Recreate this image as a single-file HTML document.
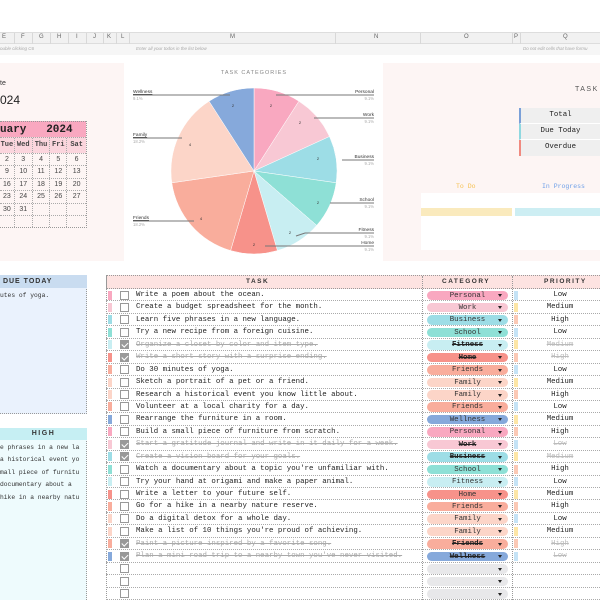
<!DOCTYPE html>
<html><head><meta charset="utf-8"><style>
*{margin:0;padding:0;box-sizing:border-box}
body{width:600px;height:600px;overflow:hidden;background:#fff;position:relative;font-family:"Liberation Sans",sans-serif}
.a{position:absolute}
.mono{font-family:"Liberation Mono",monospace}
.colh{position:absolute;top:32px;height:12px;background:#f1f1f1;left:0;width:600px;border-top:1px solid #ddd;border-bottom:1px solid #ddd}
.colh span{position:absolute;top:1px;font-size:6px;color:#666;text-align:center}
.colh i{position:absolute;top:0;height:11px;border-left:1px solid #d8d8d8}
.hint{position:absolute;top:44px;height:11px;left:0;width:600px;background:#f6f6f6;font-size:4.5px;color:#aaa;font-style:italic}
.cal{position:absolute;left:0;top:121px;width:87px;border-right:1px dotted #999;border-bottom:1px dotted #999}
.cal .t{height:16px;background:#f9a8c0;font:bold 11px "Liberation Mono",monospace;color:#222;line-height:16px;border-top:1px dotted #999}
.cal .r{display:flex;height:12.4px;border-top:1px dotted #aaa}
.cal .r div{font:7px "Liberation Sans",sans-serif;color:#444;text-align:center;line-height:11px;border-right:1px dotted #aaa}
.rows{position:absolute;left:106px;top:289px;width:494px}
.row{position:relative;height:12.45px;border-bottom:1px dotted #aaa;font:7.4px "Liberation Mono",monospace;color:#222}
.row .s{position:absolute;left:2px;top:1.5px;width:4px;height:9px}
.row .c{position:absolute;left:14px;top:1.5px;width:9px;height:9px;border:1px solid #999;background:#fff}
.row .c.k{background:#999;border-color:#999}
.row .c.k:after{content:"";position:absolute;left:2.2px;top:0px;width:2.5px;height:5px;border:solid #fff;border-width:0 1.2px 1.2px 0;transform:rotate(45deg)}
.row .x{position:absolute;left:30px;top:0;line-height:12px;white-space:nowrap}
.row.d .x{color:#aaa;text-decoration:line-through}
.row .p{position:absolute;left:321px;top:1.5px;width:81px;height:9.5px;border-radius:5px;text-align:center;line-height:10px;color:#333}
.row .p:after{content:"";position:absolute;right:6px;top:3.5px;border:2.5px solid transparent;border-top:3px solid #222}
.row.d .p{text-decoration:line-through;font-weight:bold;color:#222}
.row .q{position:absolute;left:408px;top:1.5px;width:4px;height:9px}
.row .v{position:absolute;left:414px;width:80px;text-align:center;line-height:12px}
.row.d .v{color:#bbb;text-decoration:line-through}
.vl{position:absolute;top:276px;height:324px;border-left:1px dotted #999}
</style></head><body>

<div class="colh">
<i style="left:14px"></i><i style="left:32px"></i><i style="left:50px"></i><i style="left:68px"></i><i style="left:86px"></i><i style="left:103px"></i><i style="left:116px"></i><i style="left:129px"></i><i style="left:335px"></i><i style="left:420px"></i><i style="left:512px"></i><i style="left:520px"></i>
<span style="left:2px">E</span><span style="left:21px">F</span><span style="left:39px">G</span><span style="left:57px">H</span><span style="left:76px">I</span><span style="left:93px">J</span><span style="left:107px">K</span><span style="left:121px">L</span><span style="left:230px">M</span><span style="left:374px">N</span><span style="left:464px">O</span><span style="left:514px">P</span><span style="left:563px">Q</span>
</div>
<div class="hint"><span class="a" style="left:0;top:2px">ouble clicking C6</span><span class="a" style="left:136px;top:2px">Enter all your todos in the list below</span><span class="a" style="left:523px;top:2px">Do not edit cells that have formu</span></div>

<div class="a" style="left:0;top:63px;width:124px;height:198px;background:#fdf5f4"></div>
<div class="a" style="left:383px;top:63px;width:217px;height:198px;background:#fdf5f4"></div>
<div class="a" style="left:0;top:80px;font-size:7px;color:#333">te</div>
<div class="a" style="left:0;top:93px;font-size:12px;color:#222">024</div>

<div class="cal">
<div class="t">uary&nbsp;&nbsp;&nbsp;2024</div>
<div class="r" style="background:#fbd5dd;height:16px"><div style="width:15px;font:bold 7px 'Liberation Mono',monospace;line-height:15px">Tue</div><div style="width:18px;font:bold 7px 'Liberation Mono',monospace;line-height:15px">Wed</div><div style="width:18px;font:bold 7px 'Liberation Mono',monospace;line-height:15px">Thu</div><div style="width:17px;font:bold 7px 'Liberation Mono',monospace;line-height:15px">Fri</div><div style="width:19px;font:bold 7px 'Liberation Mono',monospace;line-height:15px;border:0">Sat</div></div>
<div class="r"><div style="width:15px">2</div><div style="width:18px">3</div><div style="width:18px">4</div><div style="width:17px">5</div><div style="width:19px;border:0">6</div></div>
<div class="r"><div style="width:15px">9</div><div style="width:18px">10</div><div style="width:18px">11</div><div style="width:17px">12</div><div style="width:19px;border:0">13</div></div>
<div class="r"><div style="width:15px">16</div><div style="width:18px">17</div><div style="width:18px">18</div><div style="width:17px">19</div><div style="width:19px;border:0">20</div></div>
<div class="r"><div style="width:15px">23</div><div style="width:18px">24</div><div style="width:18px">25</div><div style="width:17px">26</div><div style="width:19px;border:0">27</div></div>
<div class="r"><div style="width:15px">30</div><div style="width:18px">31</div><div style="width:18px"></div><div style="width:17px"></div><div style="width:19px;border:0"></div></div>
<div class="r"><div style="width:15px"></div><div style="width:18px"></div><div style="width:18px"></div><div style="width:17px"></div><div style="width:19px;border:0"></div></div>
</div>

<svg class="a" style="left:0;top:0" width="600" height="270">
<text x="254" y="74" font-size="5.5" fill="#888" text-anchor="middle" letter-spacing="1" font-family="Liberation Sans">TASK CATEGORIES</text>
<g stroke="#fff" stroke-width="0.5">
<path d="M254 171L254 88A83 83 0 0 1 298.9 101.2Z" fill="#f9a8c0"/>
<path d="M254 171L298.9 101.2A83 83 0 0 1 329.5 136.5Z" fill="#f8c8d4"/>
<path d="M254 171L329.5 136.5A83 83 0 0 1 336.2 182.8Z" fill="#9ddde6"/>
<path d="M254 171L336.2 182.8A83 83 0 0 1 316.7 225.4Z" fill="#8ee0d6"/>
<path d="M254 171L316.7 225.4A83 83 0 0 1 277.4 250.6Z" fill="#c8eef2"/>
<path d="M254 171L277.4 250.6A83 83 0 0 1 230.6 250.6Z" fill="#f7928a"/>
<path d="M254 171L230.6 250.6A83 83 0 0 1 171.8 182.8Z" fill="#f9ad9c"/>
<path d="M254 171L171.8 182.8A83 83 0 0 1 209.1 101.2Z" fill="#fcd5c8"/>
<path d="M254 171L209.1 101.2A83 83 0 0 1 254 88Z" fill="#86a9db"/>
</g>
<g font-size="4" fill="#333" font-family="Liberation Sans" text-anchor="middle">
<text x="271" y="107">2</text><text x="300" y="124">2</text><text x="318" y="160">2</text><text x="318" y="204">2</text><text x="290" y="234">2</text><text x="254" y="246">2</text><text x="201" y="220">4</text><text x="190" y="146">4</text><text x="233" y="107">2</text>
</g>
<g stroke="#777" stroke-width="1" fill="none">
<path d="M133 95H230M374 95H276M374 118H314M374 160H342M374 203H330M374 233H305L296 236M374 246H265M133 138H182M133 221H194"/>
</g>
<g font-size="4.8" font-family="Liberation Sans" fill="#333">
<text x="133" y="93" text-decoration="underline">Wellness</text><text x="133" y="136" text-decoration="underline">Family</text><text x="133" y="219" text-decoration="underline">Friends</text>
<g text-anchor="end"><text x="374" y="93">Personal</text><text x="374" y="116">Work</text><text x="374" y="158">Business</text><text x="374" y="201">School</text><text x="374" y="231">Fitness</text><text x="374" y="244">Home</text></g>
</g>
<g font-size="4.2" font-family="Liberation Sans" fill="#aaa">
<text x="133" y="100">9.1%</text><text x="133" y="143">18.2%</text><text x="133" y="226">18.2%</text>
<g text-anchor="end"><text x="374" y="100">9.1%</text><text x="374" y="123">9.1%</text><text x="374" y="165">9.1%</text><text x="374" y="208">9.1%</text><text x="374" y="238">9.1%</text><text x="374" y="251">9.1%</text></g>
</g>
</svg>

<div class="a" style="left:575px;top:86px;font-size:7px;letter-spacing:1.5px;color:#555">TASK</div>
<div class="a mono" style="left:519px;top:108px;width:81px;font-size:7.4px;color:#222">
<div style="height:16px;background:#efefef;border-left:2px solid #7aa0d8;border-bottom:1px solid #fff;text-align:center;line-height:15px">Total</div>
<div style="height:16px;background:#efefef;border-left:2px solid #8fd8e0;border-bottom:1px solid #fff;text-align:center;line-height:15px">Due Today</div>
<div style="height:16px;background:#efefef;border-left:2px solid #f08a80;text-align:center;line-height:15px">Overdue</div>
</div>
<div class="a" style="left:421px;top:193px;width:179px;height:57px;background:#fff"></div>
<div class="a mono" style="left:456px;top:183px;font-size:6.5px;color:#f5c050">To Do</div>
<div class="a mono" style="left:542px;top:183px;font-size:6.5px;color:#6fa0e8">In Progress</div>
<div class="a" style="left:421px;top:208px;width:91px;height:8px;background:#faeabd"></div>
<div class="a" style="left:515px;top:208px;width:85px;height:8px;background:#cdeef3"></div>

<div class="a" style="left:0;top:275px;width:87px;height:139px;background:#eaf2fd;border:1px dotted #999;border-left:0"></div>
<div class="a" style="left:0;top:275px;width:87px;height:13px;background:#c9dcf0;font:bold 7px 'Liberation Sans',sans-serif;letter-spacing:1px;line-height:13px;color:#333">&nbsp;DUE TODAY</div>
<div class="a mono" style="left:0;top:292px;font-size:6.3px;color:#333">utes of yoga.</div>
<div class="a" style="left:0;top:428px;width:87px;height:172px;background:#eefbfd;border:1px dotted #999;border-left:0;border-bottom:0"></div>
<div class="a" style="left:0;top:428px;width:87px;height:12px;background:#c6eff3;font:bold 7px 'Liberation Sans',sans-serif;letter-spacing:1.5px;line-height:12px;color:#333;text-align:center">HIGH</div>
<div class="a mono" style="left:0;top:442px;width:87px;overflow:hidden;font-size:6.3px;line-height:12.4px;color:#333;white-space:pre">e phrases in a new la
a historical event yo
mall piece of furnitu
documentary about a 
hike in a nearby natu</div>

<div class="a" style="left:106px;top:275px;width:494px;height:14px;background:#fde3e1;border:1px dotted #999;border-right:0"></div>
<div class="a" style="left:246px;top:278px;font:bold 6.5px 'Liberation Sans',sans-serif;letter-spacing:1.5px;color:#333">TASK</div>
<div class="a" style="left:442px;top:278px;font:bold 6.5px 'Liberation Sans',sans-serif;letter-spacing:1.5px;color:#333">CATEGORY</div>
<div class="a" style="left:544px;top:278px;font:bold 6.5px 'Liberation Sans',sans-serif;letter-spacing:1.5px;color:#333">PRIORITY</div>
<div class="vl" style="left:106px"></div><div class="vl" style="left:422px"></div><div class="vl" style="left:512px"></div>

<div class="rows">
<div class="row"><div class="s" style="background:#f9a8c0"></div><div class="c"></div><div class="x">Write a poem about the ocean.</div><div class="p" style="background:#f9a8c0">Personal</div><div class="q" style="background:#c5e3f6"></div><div class="v">Low</div></div>
<div class="row"><div class="s" style="background:#f8c8d4"></div><div class="c"></div><div class="x">Create a budget spreadsheet for the month.</div><div class="p" style="background:#f8c8d4">Work</div><div class="q" style="background:#fde6a6"></div><div class="v">Medium</div></div>
<div class="row"><div class="s" style="background:#9ddde6"></div><div class="c"></div><div class="x">Learn five phrases in a new language.</div><div class="p" style="background:#9ddde6">Business</div><div class="q" style="background:#fbc9b5"></div><div class="v">High</div></div>
<div class="row"><div class="s" style="background:#8ee0d6"></div><div class="c"></div><div class="x">Try a new recipe from a foreign cuisine.</div><div class="p" style="background:#8ee0d6">School</div><div class="q" style="background:#c5e3f6"></div><div class="v">Low</div></div>
<div class="row d"><div class="s" style="background:#c8eef2"></div><div class="c k"></div><div class="x">Organize a closet by color and item type.</div><div class="p" style="background:#c8eef2">Fitness</div><div class="q" style="background:#fde6a6"></div><div class="v">Medium</div></div>
<div class="row d"><div class="s" style="background:#f7928a"></div><div class="c k"></div><div class="x">Write a short story with a surprise ending.</div><div class="p" style="background:#f7928a">Home</div><div class="q" style="background:#fbc9b5"></div><div class="v">High</div></div>
<div class="row"><div class="s" style="background:#f9ad9c"></div><div class="c"></div><div class="x">Do 30 minutes of yoga.</div><div class="p" style="background:#f9ad9c">Friends</div><div class="q" style="background:#c5e3f6"></div><div class="v">Low</div></div>
<div class="row"><div class="s" style="background:#fcd5c8"></div><div class="c"></div><div class="x">Sketch a portrait of a pet or a friend.</div><div class="p" style="background:#fcd5c8">Family</div><div class="q" style="background:#fde6a6"></div><div class="v">Medium</div></div>
<div class="row"><div class="s" style="background:#fcd5c8"></div><div class="c"></div><div class="x">Research a historical event you know little about.</div><div class="p" style="background:#fcd5c8">Family</div><div class="q" style="background:#fbc9b5"></div><div class="v">High</div></div>
<div class="row"><div class="s" style="background:#f9ad9c"></div><div class="c"></div><div class="x">Volunteer at a local charity for a day.</div><div class="p" style="background:#f9ad9c">Friends</div><div class="q" style="background:#c5e3f6"></div><div class="v">Low</div></div>
<div class="row"><div class="s" style="background:#86a9db"></div><div class="c"></div><div class="x">Rearrange the furniture in a room.</div><div class="p" style="background:#86a9db">Wellness</div><div class="q" style="background:#fde6a6"></div><div class="v">Medium</div></div>
<div class="row"><div class="s" style="background:#f9a8c0"></div><div class="c"></div><div class="x">Build a small piece of furniture from scratch.</div><div class="p" style="background:#f9a8c0">Personal</div><div class="q" style="background:#fbc9b5"></div><div class="v">High</div></div>
<div class="row d"><div class="s" style="background:#f8c8d4"></div><div class="c k"></div><div class="x">Start a gratitude journal and write in it daily for a week.</div><div class="p" style="background:#f8c8d4">Work</div><div class="q" style="background:#c5e3f6"></div><div class="v">Low</div></div>
<div class="row d"><div class="s" style="background:#9ddde6"></div><div class="c k"></div><div class="x">Create a vision board for your goals.</div><div class="p" style="background:#9ddde6">Business</div><div class="q" style="background:#fde6a6"></div><div class="v">Medium</div></div>
<div class="row"><div class="s" style="background:#8ee0d6"></div><div class="c"></div><div class="x">Watch a documentary about a topic you're unfamiliar with.</div><div class="p" style="background:#8ee0d6">School</div><div class="q" style="background:#fbc9b5"></div><div class="v">High</div></div>
<div class="row"><div class="s" style="background:#c8eef2"></div><div class="c"></div><div class="x">Try your hand at origami and make a paper animal.</div><div class="p" style="background:#c8eef2">Fitness</div><div class="q" style="background:#c5e3f6"></div><div class="v">Low</div></div>
<div class="row"><div class="s" style="background:#f7928a"></div><div class="c"></div><div class="x">Write a letter to your future self.</div><div class="p" style="background:#f7928a">Home</div><div class="q" style="background:#fde6a6"></div><div class="v">Medium</div></div>
<div class="row"><div class="s" style="background:#f9ad9c"></div><div class="c"></div><div class="x">Go for a hike in a nearby nature reserve.</div><div class="p" style="background:#f9ad9c">Friends</div><div class="q" style="background:#fbc9b5"></div><div class="v">High</div></div>
<div class="row"><div class="s" style="background:#fcd5c8"></div><div class="c"></div><div class="x">Do a digital detox for a whole day.</div><div class="p" style="background:#fcd5c8">Family</div><div class="q" style="background:#c5e3f6"></div><div class="v">Low</div></div>
<div class="row"><div class="s" style="background:#fcd5c8"></div><div class="c"></div><div class="x">Make a list of 10 things you're proud of achieving.</div><div class="p" style="background:#fcd5c8">Family</div><div class="q" style="background:#fde6a6"></div><div class="v">Medium</div></div>
<div class="row d"><div class="s" style="background:#f9ad9c"></div><div class="c k"></div><div class="x">Paint a picture inspired by a favorite song.</div><div class="p" style="background:#f9ad9c">Friends</div><div class="q" style="background:#fbc9b5"></div><div class="v">High</div></div>
<div class="row d"><div class="s" style="background:#86a9db"></div><div class="c k"></div><div class="x">Plan a mini road trip to a nearby town you've never visited.</div><div class="p" style="background:#86a9db">Wellness</div><div class="q" style="background:#c5e3f6"></div><div class="v">Low</div></div>
<div class="row"><div class="c"></div><div class="p" style="background:#e8e8ea"></div></div>
<div class="row"><div class="c"></div><div class="p" style="background:#e8e8ea"></div></div>
<div class="row"><div class="c"></div><div class="p" style="background:#e8e8ea"></div></div>
</div>
</body></html>
